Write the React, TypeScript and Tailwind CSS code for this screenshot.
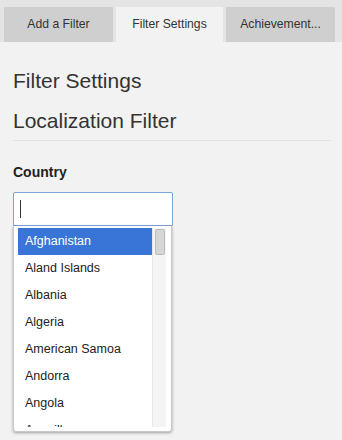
import React from "react";

const countries = [
  "Afghanistan",
  "Aland Islands",
  "Albania",
  "Algeria",
  "American Samoa",
  "Andorra",
  "Angola",
  "Anguilla",
];

export default function App() {
  return (
    <div
      className="w-[342px] h-[440px] bg-[#f2f2f2] overflow-hidden text-[#222]"
      style={{ fontFamily: '"Liberation Sans", Arial, sans-serif' }}
    >
      <div className="h-[42px] bg-[#e4e4e4] flex items-end pl-[4px] gap-[3px]">
        <div className="w-[109px] h-[35px] bg-[#cfcfcf] flex items-center justify-center text-[12.2px] text-[#333]">
          Add a Filter
        </div>
        <div className="w-[107px] h-[35px] bg-[#f2f2f2] flex items-center justify-center text-[12.2px] text-[#333]">
          Filter Settings
        </div>
        <div className="w-[109px] h-[35px] bg-[#cfcfcf] flex items-center justify-center text-[12.2px] text-[#333]">
          Achievement...
        </div>
      </div>
      <div className="px-[13px]">
        <div className="pt-[27px] text-[21px] leading-[24px] text-[#333]">Filter Settings</div>
        <div className="pt-[16px] text-[21px] leading-[24px] text-[#333]">Localization Filter</div>
        <div className="mt-[7px] h-px bg-[#e2e2e2] mr-[-2px]" />
        <div className="pt-[23px] text-[14px] font-bold leading-[16px] text-[#222]">Country</div>
        <div className="mt-[12px] w-[160px] relative">
          <div className="h-[34px] bg-white border border-[#7ea3d8] rounded-t-[2px] flex items-center pl-[6px]">
            <div className="w-px h-[18px] bg-[#333]" />
          </div>
          <div className="absolute left-0 top-[34px] w-[159px] h-[206px] bg-white rounded-b-[3px] shadow-[0_1px_3px_rgba(0,0,0,0.35)] border border-[#c8c8c8] border-t-0 pl-[4px] pr-[5px] pt-[2px] pb-[4px] flex">
            <div className="flex-1 overflow-hidden">
              {countries.map((c, i) => (
                <div
                  key={c}
                  className={
                    "h-[27px] flex items-center pl-[7px] text-[12.5px] " +
                    (i === 0 ? "bg-[#3875d7] text-white" : "text-[#222]")
                  }
                >
                  {c}
                </div>
              ))}
            </div>
            <div className="w-[14px] bg-[#f4f4f4] border-l border-[#e6e6e6] pt-[1px] flex justify-center">
              <div className="w-[10px] h-[26px] bg-[#d6d6d6] border border-[#bcbcbc] rounded-[2px]" />
            </div>
          </div>
        </div>
      </div>
    </div>
  );
}
